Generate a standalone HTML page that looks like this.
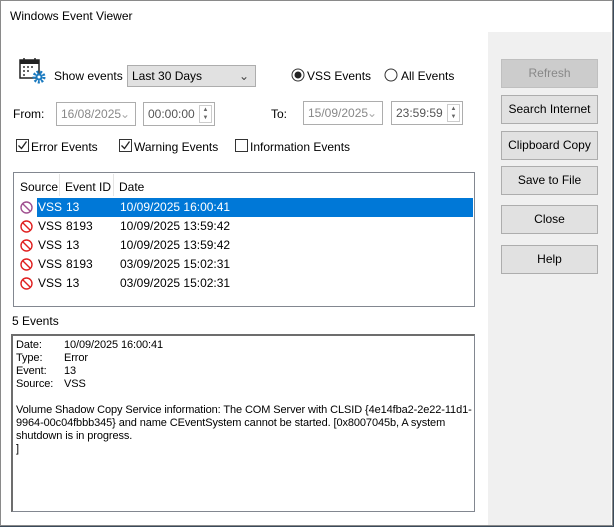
<!DOCTYPE html>
<html><head><style>
*{box-sizing:border-box;margin:0;padding:0}
body{width:614px;height:527px;overflow:hidden;background:#3a4a5a;font-family:"Liberation Sans",sans-serif;font-size:12px;color:#000;position:relative}
.a{position:absolute}
.win{left:0;top:0;width:613px;height:526px;background:#fff;border:1px solid #8a8a8a}
.panel{left:488px;top:32px;width:123px;height:493px;background:#f0f0f0}
.btn{position:absolute;left:501px;width:97px;height:29px;background:#e1e1e1;border:1px solid #adadad;text-align:center;line-height:27px}
.box{position:absolute;border:1px solid #adadad;background:#fff;height:24px;line-height:22px;padding-left:4px}
.cb{position:absolute;width:13px;height:13px;border:1px solid #333;background:#fff}
.row{position:absolute;left:14px;width:459px;height:19px;line-height:19px}
.ic{position:absolute;left:6px;top:3px;width:13px;height:13px}
.det{font-size:11px;letter-spacing:-0.1px;line-height:13px}
.det div{position:absolute;left:3px;white-space:pre}
</style></head><body>
<div class="a win"></div>
<div class="a" style="left:10px;top:9px;font-size:12px">Windows Event Viewer</div>
<div class="a panel"></div>
<svg class="a" style="left:19px;top:57px" width="28" height="28" viewBox="0 0 28 28"><rect x="1" y="3" width="19" height="18" fill="#fff" stroke="#222" stroke-width="1.5"/><rect x="1" y="3" width="19" height="4" fill="#222"/><line x1="5" y1="1" x2="5" y2="5" stroke="#222" stroke-width="1.5"/><line x1="16" y1="1" x2="16" y2="5" stroke="#222" stroke-width="1.5"/><g fill="#666"><rect x="4" y="9" width="2" height="2"/><rect x="8" y="9" width="2" height="2"/><rect x="12" y="9" width="2" height="2"/><rect x="4" y="13" width="2" height="2"/><rect x="8" y="13" width="2" height="2"/><rect x="4" y="17" width="2" height="2"/></g><circle cx="20" cy="20" r="5" fill="none" stroke="#1a7ac0" stroke-width="3" stroke-dasharray="2 1.5"/><circle cx="20" cy="20" r="3.5" fill="#1a7ac0"/><circle cx="20" cy="20" r="1.5" fill="#fff"/></svg>
<div class="a" style="left:54px;top:69px">Show events</div>
<div class="box" style="left:127px;top:65px;width:129px;height:22px;line-height:20px;background:#e1e1e1;border-color:#adadad">Last 30 Days<span style="position:absolute;right:6px;top:0;color:#444">&#8964;</span></div>
<svg class="a" style="left:291px;top:68px" width="14" height="14"><circle cx="7" cy="7" r="6" fill="#fff" stroke="#333"/><circle cx="7" cy="7" r="3.5" fill="#222"/></svg>
<div class="a" style="left:307px;top:69px">VSS Events</div>
<svg class="a" style="left:384px;top:68px" width="14" height="14"><circle cx="7" cy="7" r="6" fill="#fff" stroke="#333"/></svg>
<div class="a" style="left:401px;top:69px">All Events</div>
<div class="a" style="left:13px;top:107px">From:</div>
<div class="box" style="left:56px;top:102px;width:80px;color:#888">16/08/2025<span style="position:absolute;right:5px;color:#aaa">&#8964;</span></div>
<div class="box" style="left:143px;top:102px;width:72px;color:#555">00:00:00<span style="position:absolute;right:2px;top:2px;width:13px;height:18px;border:1px solid #ccc;font-size:6px;line-height:8px;text-align:center;color:#666">▲<br>▼</span></div>
<div class="a" style="left:271px;top:107px">To:</div>
<div class="box" style="left:303px;top:101px;width:80px;color:#888">15/09/2025<span style="position:absolute;right:5px;color:#aaa">&#8964;</span></div>
<div class="box" style="left:391px;top:101px;width:72px;color:#555">23:59:59<span style="position:absolute;right:2px;top:2px;width:13px;height:18px;border:1px solid #ccc;font-size:6px;line-height:8px;text-align:center;color:#666">▲<br>▼</span></div>
<div class="cb" style="left:16px;top:139px"><svg width="11" height="11"><path d="M1.5 5.5l3 3 5-7" fill="none" stroke="#222" stroke-width="1.3"/></svg></div>
<div class="a" style="left:31px;top:140px">Error Events</div>
<div class="cb" style="left:119px;top:139px"><svg width="11" height="11"><path d="M1.5 5.5l3 3 5-7" fill="none" stroke="#222" stroke-width="1.3"/></svg></div>
<div class="a" style="left:134px;top:140px">Warning Events</div>
<div class="cb" style="left:235px;top:139px"></div>
<div class="a" style="left:250px;top:140px">Information Events</div>
<div class="a" style="left:13px;top:172px;width:462px;height:135px;border:1px solid #828790;background:#fff"></div>
<div class="a" style="left:20px;top:180px">Source</div>
<div class="a" style="left:59px;top:174px;width:1px;height:22px;background:#e5e5e5"></div>
<div class="a" style="left:65px;top:180px">Event ID</div>
<div class="a" style="left:113px;top:174px;width:1px;height:22px;background:#e5e5e5"></div>
<div class="a" style="left:119px;top:180px">Date</div>
<div class="a" style="left:37px;top:198px;width:436px;height:19px;background:#0078d7"></div>
<div class="row" style="top:198px;color:#fff"><svg class="ic" viewBox="0 0 13 13"><circle cx="6.5" cy="6.5" r="5.5" fill="none" stroke="#a05090" stroke-width="1.4"/><line x1="2.6" y1="2.6" x2="10.4" y2="10.4" stroke="#a05090" stroke-width="1.4"/></svg><span class="a" style="left:24px">VSS</span><span class="a" style="left:52px">13</span><span class="a" style="left:106px">10/09/2025 16:00:41</span></div>
<div class="row" style="top:217px"><svg class="ic" viewBox="0 0 13 13"><circle cx="6.5" cy="6.5" r="5.5" fill="none" stroke="#e02020" stroke-width="1.4"/><line x1="2.6" y1="2.6" x2="10.4" y2="10.4" stroke="#e02020" stroke-width="1.4"/></svg><span class="a" style="left:24px">VSS</span><span class="a" style="left:52px">8193</span><span class="a" style="left:106px">10/09/2025 13:59:42</span></div>
<div class="row" style="top:236px"><svg class="ic" viewBox="0 0 13 13"><circle cx="6.5" cy="6.5" r="5.5" fill="none" stroke="#e02020" stroke-width="1.4"/><line x1="2.6" y1="2.6" x2="10.4" y2="10.4" stroke="#e02020" stroke-width="1.4"/></svg><span class="a" style="left:24px">VSS</span><span class="a" style="left:52px">13</span><span class="a" style="left:106px">10/09/2025 13:59:42</span></div>
<div class="row" style="top:255px"><svg class="ic" viewBox="0 0 13 13"><circle cx="6.5" cy="6.5" r="5.5" fill="none" stroke="#e02020" stroke-width="1.4"/><line x1="2.6" y1="2.6" x2="10.4" y2="10.4" stroke="#e02020" stroke-width="1.4"/></svg><span class="a" style="left:24px">VSS</span><span class="a" style="left:52px">8193</span><span class="a" style="left:106px">03/09/2025 15:02:31</span></div>
<div class="row" style="top:274px"><svg class="ic" viewBox="0 0 13 13"><circle cx="6.5" cy="6.5" r="5.5" fill="none" stroke="#e02020" stroke-width="1.4"/><line x1="2.6" y1="2.6" x2="10.4" y2="10.4" stroke="#e02020" stroke-width="1.4"/></svg><span class="a" style="left:24px">VSS</span><span class="a" style="left:52px">13</span><span class="a" style="left:106px">03/09/2025 15:02:31</span></div>
<div class="a" style="left:12px;top:314px">5 Events</div>
<div class="a det" style="left:11px;top:334px;width:464px;height:178px;border:1px solid #828790;border-top:2px solid #6d6d6d;border-left:2px solid #6d6d6d;background:#fff">
<div style="top:3px">Date:</div><div style="top:3px;left:51px">10/09/2025 16:00:41</div>
<div style="top:16px">Type:</div><div style="top:16px;left:51px">Error</div>
<div style="top:29px">Event:</div><div style="top:29px;left:51px">13</div>
<div style="top:42px">Source:</div><div style="top:42px;left:51px">VSS</div>
<div style="top:68px">Volume Shadow Copy Service information: The COM Server with CLSID {4e14fba2-2e22-11d1-</div>
<div style="top:81px">9964-00c04fbbb345} and name CEventSystem cannot be started. [0x8007045b, A system</div>
<div style="top:94px">shutdown is in progress.</div>
<div style="top:107px">]</div>
</div>
<div class="btn" style="top:59px;background:#cccccc;border-color:#bfbfbf;color:#888">Refresh</div>
<div class="btn" style="top:95px">Search Internet</div>
<div class="btn" style="top:131px">Clipboard Copy</div>
<div class="btn" style="top:166px">Save to File</div>
<div class="btn" style="top:205px">Close</div>
<div class="btn" style="top:245px">Help</div>
</body></html>
